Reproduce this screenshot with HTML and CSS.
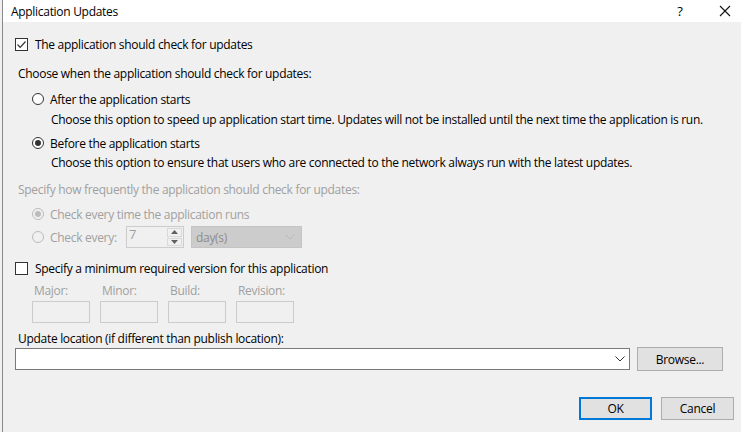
FILE: index.html
```html
<!DOCTYPE html>
<html lang="en">
<head>
  <meta charset="UTF-8" />
  <title>Application Updates</title>
  <link rel="stylesheet" href="styles.css">
</head>
<body>
  <div class="dialog">
    <div class="titlebar">
      <span class="title">Application Updates</span>
      <span class="help">?</span>
      <span class="close">
        <svg width="12" height="12" viewBox="0 0 12 12"><path d="M1 1 L11 11 M11 1 L1 11" stroke="#111" stroke-width="1.1" fill="none"/></svg>
      </span>
    </div>

    <div class="content">
      <div class="row row-check1">
        <span class="checkbox checked">
          <svg width="11" height="11" viewBox="0 0 11 11"><path d="M1.5 5.5 L4.2 8.3 L9.5 2.5" stroke="#333" stroke-width="1.2" fill="none"/></svg>
        </span>
        <span>The application should check for updates</span>
      </div>

      <div class="row row-when label">Choose when the application should check for updates:</div>

      <div class="row row-radio1 option">
        <span class="radio"></span>
        <span>After the application starts</span>
      </div>
      <div class="row desc desc1">Choose this option to speed up application start time. Updates will not be installed until the next time the application is run.</div>

      <div class="row row-radio2 option">
        <span class="radio checked"></span>
        <span>Before the application starts</span>
      </div>
      <div class="row desc desc2">Choose this option to ensure that users who are connected to the network always run with the latest updates.</div>

      <div class="row row-freq label disabled">Specify how frequently the application should check for updates:</div>

      <div class="row row-every option disabled">
        <span class="radio checked"></span>
        <span>Check every time the application runs</span>
      </div>

      <div class="row row-interval option disabled">
        <span class="radio"></span>
        <span class="every-label">Check every:</span>
        <div class="spin">
          <span class="spin-value">7</span>
          <div class="spin-btns">
            <span class="spin-btn"><svg width="7" height="4" viewBox="0 0 7 4"><path d="M0 4 L3.5 0 L7 4 Z" fill="#606060"/></svg></span>
            <span class="spin-btn"><svg width="7" height="4" viewBox="0 0 7 4"><path d="M0 0 L3.5 4 L7 0 Z" fill="#606060"/></svg></span>
          </div>
        </div>
        <div class="combo combo-disabled">
          <span>day(s)</span>
          <svg width="10" height="6" viewBox="0 0 10 6"><path d="M0.5 0.5 L5 5 L9.5 0.5" stroke="#b8b8b8" stroke-width="1" fill="none"/></svg>
        </div>
      </div>

      <div class="row row-check2">
        <span class="checkbox"></span>
        <span>Specify a minimum required version for this application</span>
      </div>

      <div class="version">
        <div class="version-field">
          <span class="version-label">Major:</span>
          <span class="version-box"></span>
        </div>
        <div class="version-field">
          <span class="version-label">Minor:</span>
          <span class="version-box"></span>
        </div>
        <div class="version-field">
          <span class="version-label">Build:</span>
          <span class="version-box"></span>
        </div>
        <div class="version-field">
          <span class="version-label">Revision:</span>
          <span class="version-box"></span>
        </div>
      </div>

      <div class="row row-location label">Update location (if different than publish location):</div>

      <div class="location">
        <div class="combo combo-location">
          <span></span>
          <svg width="10" height="6" viewBox="0 0 10 6"><path d="M0.5 0.5 L5 5 L9.5 0.5" stroke="#333" stroke-width="1" fill="none"/></svg>
        </div>
        <button class="btn btn-browse">Browse...</button>
      </div>

      <div class="footer">
        <button class="btn btn-ok">OK</button>
        <button class="btn">Cancel</button>
      </div>
    </div>
  </div>
</body>
</html>
```

FILE: styles.css
```css
html, body {
  margin: 0;
  padding: 0;
}

body {
  width: 741px;
  height: 432px;
  overflow: hidden;
  background-color: #f0f0f0;
  font-family: "Open Sans", "Liberation Sans", sans-serif;
  font-size: 12px;
  color: #000;
}

.dialog {
  margin-left: 2px;
  height: 432px;
  border-left: 1px solid #8a8a8a;
  background-color: #f0f0f0;
}

.titlebar {
  height: 22px;
  display: flex;
  align-items: center;
  background-color: #fff;
  padding-left: 8px;
}

.title {
  flex: 1;
  letter-spacing: -0.3px;
}

.help {
  width: 58px;
  text-align: center;
  font-size: 13px;
}

.close {
  width: 32px;
  display: flex;
  justify-content: center;
}

.content {
  padding-left: 12px;
  letter-spacing: -0.3px;
}

.row {
  display: flex;
  align-items: center;
  height: 14px;
  white-space: nowrap;
}

.row-check1 { margin-top: 15px; }
.row-when { margin-top: 15px; }
.row-radio1 { margin-top: 12px; }
.desc1 { margin-top: 6px; }
.row-radio2 { margin-top: 10px; }
.desc2 { margin-top: 5px; }
.row-freq { margin-top: 13px; }
.row-every { margin-top: 11px; }
.row-interval { margin-top: 5px; height: 22px; }
.row-check2 { margin-top: 13px; }
.row-location { margin-top: 8px; }

.label {
  padding-left: 3px;
}

.option {
  padding-left: 17px;
}

.desc {
  padding-left: 36px;
}

.disabled {
  color: #a0a0a0;
}

.checkbox {
  width: 11px;
  height: 11px;
  border: 1px solid #333;
  margin-right: 7px;
  display: flex;
  align-items: center;
  justify-content: center;
  background-color: #fff;
}

.radio {
  box-sizing: border-box;
  width: 12px;
  height: 12px;
  border: 1px solid #333;
  border-radius: 50%;
  margin-right: 6px;
  background-color: #fff;
  position: relative;
}

.radio.checked::after {
  content: "";
  position: absolute;
  left: 2px;
  top: 2px;
  width: 6px;
  height: 6px;
  border-radius: 50%;
  background-color: #333;
}

.disabled .radio {
  border-color: #bcbcbc;
  background-color: #f0f0f0;
}

.disabled .radio.checked::after {
  background-color: #bcbcbc;
}

.every-label {
  width: 76px;
}

.spin {
  box-sizing: border-box;
  width: 58px;
  height: 22px;
  border: 1px solid #cccccc;
  display: flex;
  align-items: stretch;
  background-color: #f0f0f0;
}

.spin-value {
  flex: 1;
  padding-left: 2px;
  line-height: 14px;
  font-size: 13px;
}

.spin-btns {
  width: 15px;
  display: flex;
  flex-direction: column;
  padding: 1px 1px 1px 0;
  gap: 1px;
}

.spin-btn {
  flex: 1;
  display: flex;
  align-items: center;
  justify-content: center;
  background-color: #f0f0f0;
  border: 1px solid #d9d9d9;
}

.combo {
  box-sizing: border-box;
  height: 22px;
  display: flex;
  align-items: center;
  justify-content: space-between;
  padding: 0 6px 0 4px;
}

.combo-disabled {
  width: 111px;
  margin-left: 7px;
  background-color: #cccccc;
  border: 1px solid #c4c4c4;
  color: #8c8c8c;
}

.version {
  display: flex;
  margin-top: 9px;
  padding-left: 17px;
  gap: 10px;
}

.version-field {
  display: flex;
  flex-direction: column;
}

.version-label {
  height: 14px;
  line-height: 14px;
  padding-left: 2px;
  color: #a0a0a0;
}

.version-box {
  box-sizing: border-box;
  width: 58px;
  height: 22px;
  margin-top: 3px;
  border: 1px solid #cccccc;
}

.location {
  display: flex;
  align-items: center;
  margin-top: 2px;
  height: 24px;
}

.combo-location {
  width: 615px;
  background-color: #fff;
  border: 1px solid #7a7a7a;
  padding-right: 4px;
}

.btn {
  box-sizing: border-box;
  font-family: inherit;
  font-size: 12px;
  letter-spacing: -0.3px;
  color: #000;
  background-color: #e1e1e1;
  border: 1px solid #adadad;
  width: 73px;
  height: 23px;
  padding: 0;
}

.btn-browse {
  width: 86px;
  height: 24px;
  margin-left: 7px;
}

.footer {
  display: flex;
  justify-content: flex-end;
  gap: 9px;
  margin-top: 26px;
  padding-right: 7px;
}

.btn-ok {
  border: 2px solid #0078d7;
}
```
